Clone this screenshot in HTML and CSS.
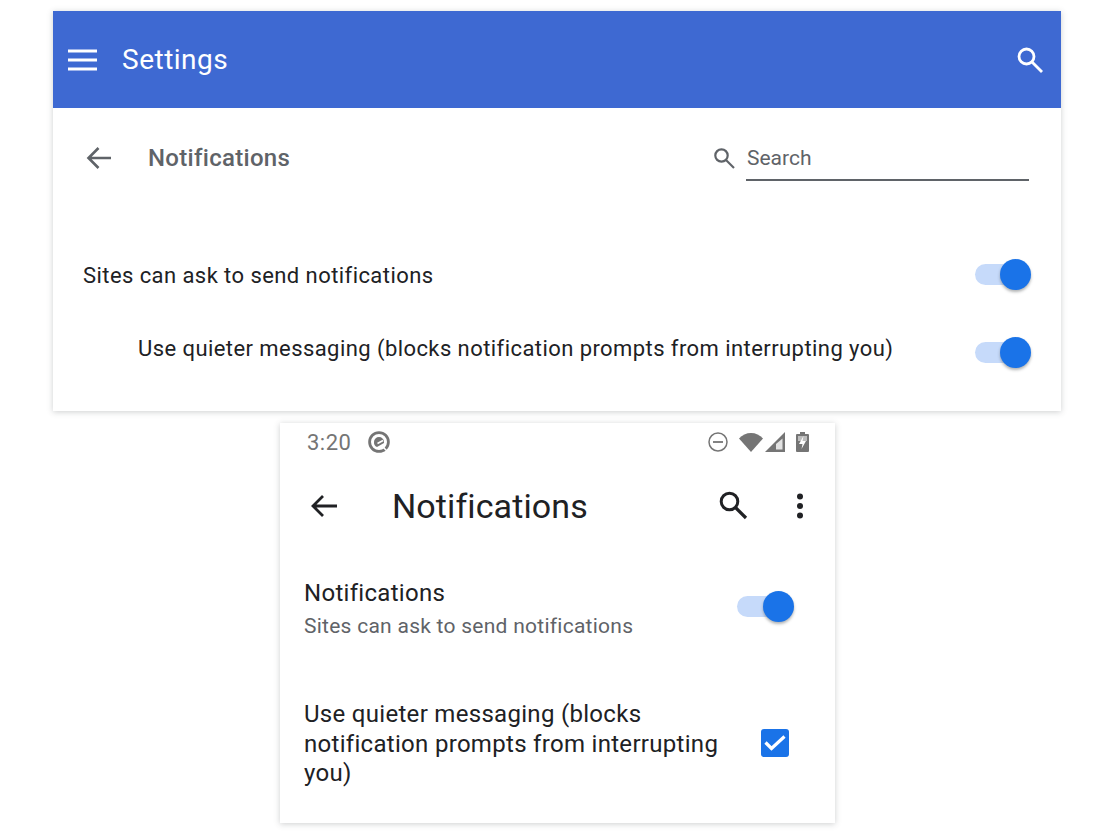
FILE: index.html
```html
<!DOCTYPE html>
<html lang="en">
<head>
    <meta charset="UTF-8">
    <title>Notifications</title>
    <link rel="stylesheet" href="styles.css">
</head>
<body>
    <!-- Desktop settings -->
    <div class="desktop card">
        <div class="appbar">
            <svg class="menu-icon" width="30" height="22" viewBox="0 0 30 22"><path d="M0 2h29M0 11h29M0 20h29" stroke="#fff" stroke-width="3" fill="none"/></svg>
            <div class="appbar-title">Settings</div>
            <svg class="appbar-search" width="28" height="28" viewBox="0 0 28 28"><circle cx="10.500" cy="10.500" r="7.500" stroke="#fff" stroke-width="2.800" fill="none"/><path d="M16 16l10 10" stroke="#fff" stroke-width="2.800" fill="none"/></svg>
        </div>
        <div class="subbar">
            <svg class="back-icon" width="26" height="24" viewBox="0 0 26 24"><path d="M25 12H3M12.500 2L2.500 12l10 10" stroke="#5f6368" stroke-width="2.600" fill="none"/></svg>
            <div class="subbar-title">Notifications</div>
            <svg class="search-icon" width="22" height="22" viewBox="0 0 22 22"><circle cx="8.500" cy="8.500" r="6.200" stroke="#5f6368" stroke-width="2.200" fill="none"/><path d="M13 13l8 8" stroke="#5f6368" stroke-width="2.200" fill="none"/></svg>
            <div class="search-field">Search</div>
        </div>
        <div class="row row-first">
            <div class="row-label">Sites can ask to send notifications</div>
            <div class="toggle"><div class="toggle-knob"></div></div>
        </div>
        <div class="row row-second">
            <div class="row-label">Use quieter messaging (blocks notification prompts from interrupting you)</div>
            <div class="toggle"><div class="toggle-knob"></div></div>
        </div>
    </div>

    <!-- Phone settings -->
    <div class="phone card">
        <div class="statusbar">
            <span class="time">3:20</span>
            <svg class="status-app" width="22" height="22" viewBox="0 0 22 22"><circle cx="11" cy="11" r="9.400" stroke="#757575" stroke-width="2.800" fill="none"/><path d="M6 11a5 5 0 0 1 10 0v1L9 16a5 5 0 0 1-3-5z" fill="#757575"/><path d="M9.500 12.500L15 9.500" stroke="#fff" stroke-width="1.500" fill="none"/><path d="M14.500 15.500L19 20" stroke="#fff" stroke-width="1.500" fill="none"/></svg>
            <svg class="status-dnd" width="20" height="20" viewBox="0 0 20 20"><circle cx="10" cy="10" r="9" stroke="#757575" stroke-width="1.500" fill="none"/><path d="M5 10h10" stroke="#757575" stroke-width="1.800"/></svg>
            <svg class="status-wifi" width="24" height="19" viewBox="0 0 24 19"><path d="M0 5.500C3 2 7.500 0 12 0s9 2 12 5.500L12 19z" fill="#757575"/></svg>
            <svg class="status-signal" width="20" height="20" viewBox="0 0 20 20"><path d="M20 0v20H0z" fill="#757575"/><path d="M17.500 6.500v11H11V12z" fill="#e3e3e3"/></svg>
            <svg class="status-battery" width="13" height="20" viewBox="0 0 13 20"><path d="M4 0h5v2h3a1 1 0 0 1 1 1v16a1 1 0 0 1-1 1H1a1 1 0 0 1-1-1V3a1 1 0 0 1 1-1h3z" fill="#757575"/><path d="M2 4h9v5H2z" fill="#bdbdbd"/><path d="M7.500 4L3 12h3.500l-1 5L10 9H6.500z" fill="#fff"/></svg>
        </div>
        <div class="toolbar">
            <svg class="toolbar-back" width="28" height="24" viewBox="0 0 28 24"><path d="M27 12H3M13 2L3 12l10 10" stroke="#202124" stroke-width="2.800" fill="none"/></svg>
            <div class="toolbar-title">Notifications</div>
            <svg class="toolbar-search" width="30" height="30" viewBox="0 0 30 30"><circle cx="10.500" cy="10.500" r="8.300" stroke="#202124" stroke-width="3" fill="none"/><path d="M16.500 16.500L27 27" stroke="#202124" stroke-width="3.200" fill="none"/></svg>
            <svg class="toolbar-more" width="8" height="26" viewBox="0 0 8 26"><circle cx="4" cy="3.500" r="3" fill="#202124"/><circle cx="4" cy="13" r="3" fill="#202124"/><circle cx="4" cy="22.500" r="3" fill="#202124"/></svg>
        </div>
        <div class="phone-row">
            <div class="phone-text">
                <div class="phone-label">Notifications</div>
                <div class="phone-sub">Sites can ask to send notifications</div>
            </div>
            <div class="toggle"><div class="toggle-knob"></div></div>
        </div>
        <div class="phone-row phone-row-quiet">
            <div class="phone-label phone-label-long">Use quieter messaging (blocks notification prompts from interrupting you)</div>
            <div class="checkbox">
                <svg width="22" height="16" viewBox="0 0 22 16"><path d="M1.500 7.500l6 6L20.500 1.500" stroke="#fff" stroke-width="3.200" fill="none"/></svg>
            </div>
        </div>
    </div>
</body>
</html>
```

FILE: styles.css
```css
body {
    margin: 0;
    padding-top: 11px;
    height: 825px;
    overflow: hidden;
    background-color: white;
    font-family: Roboto, sans-serif;
}
.card {
    background-color: white;
    box-shadow: 0 1px 6px rgba(60, 64, 67, 0.25);
}
.desktop {
    width: 1008px;
    height: 400px;
    margin-left: 53px;
}
.appbar {
    height: 97px;
    background-color: #3e69d2;
    display: flex;
    align-items: center;
    padding: 0 17px 0 15px;
    color: white;
}
.appbar-title {
    font-size: 28px;
    letter-spacing: 0.5px;
    margin-left: 24px;
    flex: 1;
}
.subbar {
    display: flex;
    align-items: center;
    height: 100px;
    padding: 0 32px 0 33px;
    color: #5f6368;
}
.subbar-title {
    font-size: 24px;
    font-weight: 500;
    letter-spacing: 0.3px;
    margin-left: 36px;
    flex: 1;
}
.search-field {
    width: 283px;
    height: 44px;
    line-height: 42px;
    font-size: 21px;
    margin-left: 11px;
    margin-top: 1px;
    padding-left: 1px;
    border-bottom: 2px solid #5f6368;
    box-sizing: border-box;
}
.row {
    display: flex;
    align-items: center;
    justify-content: space-between;
    padding: 0 30px 0 30px;
    height: 40px;
    font-size: 22px;
    letter-spacing: 0.43px;
    color: #202124;
}
.row .toggle {
    margin-bottom: 2px;
}
.row-first {
    margin-top: 47px;
}
.row-second {
    margin-top: 38px;
    padding-left: 85px;
}
.row-second .row-label {
    margin-bottom: 10px;
}
.toggle {
    position: relative;
    width: 50px;
    height: 21px;
    margin-right: 6px;
    border-radius: 11px;
    background-color: #c6dafa;
}
.toggle-knob {
    position: absolute;
    right: -6px;
    top: -5px;
    width: 31px;
    height: 31px;
    border-radius: 50%;
    background-color: #1a73e8;
    box-shadow: 0 2px 3px rgba(60, 64, 67, 0.4);
}
.phone {
    width: 555px;
    height: 400px;
    margin-left: 280px;
    margin-top: 12px;
}
.statusbar {
    display: flex;
    align-items: center;
    height: 38px;
    padding: 0 26px 0 27px;
    color: #757575;
}
.time {
    font-size: 22px;
    letter-spacing: 0.5px;
}
.status-app {
    margin-left: 17px;
    margin-right: auto;
}
.status-wifi {
    margin-left: 11px;
}
.status-signal {
    margin-left: 2px;
}
.status-battery {
    margin-left: 11px;
}
.toolbar {
    display: flex;
    align-items: center;
    height: 90px;
    padding: 0 31px 0 30px;
}
.toolbar-title {
    font-size: 34px;
    letter-spacing: 0.1px;
    color: #202124;
    margin-left: 54px;
    flex: 1;
}
.toolbar-more {
    margin-left: 47px;
}
.phone-row {
    display: flex;
    align-items: center;
    justify-content: space-between;
    padding: 0 41px 0 24px;
}
.phone-row .toggle {
    width: 51px;
    align-self: flex-start;
    margin-top: 45px;
}
.phone-text {
    margin-top: 27px;
}
.phone-label {
    font-size: 24px;
    letter-spacing: 0.3px;
    line-height: 30px;
    color: #202124;
}
.phone-sub {
    font-size: 21px;
    letter-spacing: 0.26px;
    line-height: 30px;
    margin-top: 3px;
    color: #5f6368;
}
.phone-label-long {
    width: 430px;
    line-height: 29.5px;
}
.phone-row-quiet {
    margin-top: 59px;
    padding-right: 46px;
}
.checkbox {
    width: 28px;
    height: 28px;
    margin-bottom: 2px;
    border-radius: 3px;
    background-color: #1a73e8;
    display: flex;
    align-items: center;
    justify-content: center;
}
```
